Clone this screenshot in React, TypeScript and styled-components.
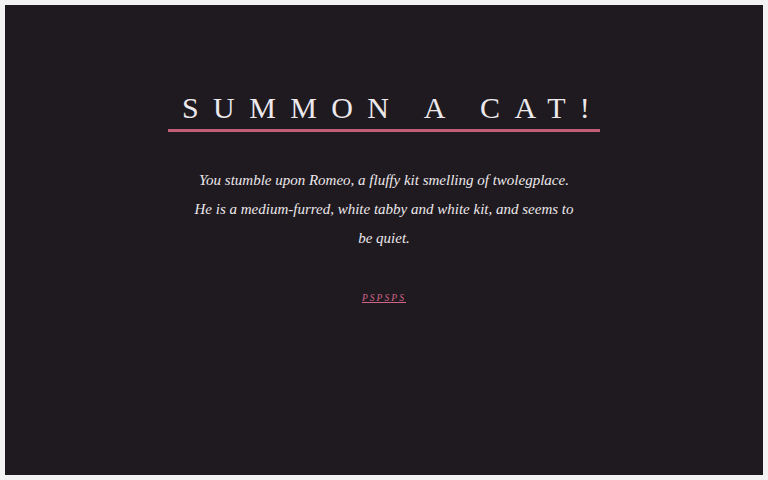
import React from 'react';
import styled, { createGlobalStyle } from 'styled-components';

const GlobalStyle = createGlobalStyle`
  html, body {
    margin: 0;
    padding: 0;
    background: #f4f3f4;
  }
  body {
    padding: 5px;
    box-sizing: border-box;
    height: 480px;
  }
  #root {
    height: 100%;
  }
`;

const Page = styled.div`
  height: 100%;
  background-color: #1f1a1f;
  display: flex;
  flex-direction: column;
  align-items: center;
  padding-top: 84px;
  box-sizing: border-box;
  font-family: 'Liberation Serif', 'Times New Roman', serif;
  color: #ece8ec;
`;

const Title = styled.h1`
  margin: 0;
  width: 432px;
  text-align: center;
  white-space: nowrap;
  font-weight: 400;
  font-size: 30px;
  line-height: 38px;
  letter-spacing: 14.4px;
  text-indent: 14px;
  padding-bottom: 2px;
  border-bottom: 3px solid #c25f78;
`;

const Blurb = styled.p`
  margin: 34px 0 0;
  width: 388px;
  text-align: center;
  font-style: italic;
  font-size: 15px;
  line-height: 29px;
`;

const Pspsps = styled.a`
  margin-top: 40px;
  color: #d0658a;
  font-style: italic;
  font-size: 9.5px;
  letter-spacing: 0.22em;
  text-decoration: underline;
  cursor: pointer;
`;

const App = () => {
  return (
    <>
      <GlobalStyle />
      <Page>
        <Title>SUMMON A CAT!</Title>
        <Blurb>
          You stumble upon Romeo, a fluffy kit smelling of twolegplace.
          <br />
          He is a medium-furred, white tabby and white kit, and seems to be quiet.
        </Blurb>
        <Pspsps>PSPSPS</Pspsps>
      </Page>
    </>
  );
};

export default App;
